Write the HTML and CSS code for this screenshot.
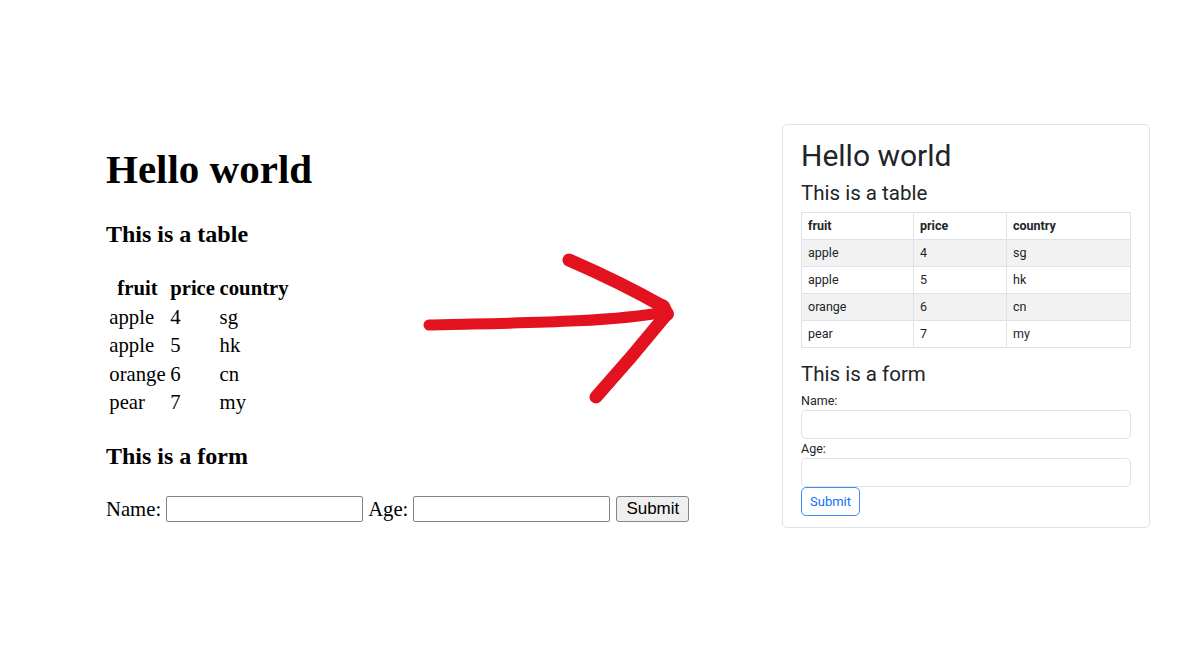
FILE: index.html
```html
<!DOCTYPE html>
<html lang="en">
<head>
    <meta charset="UTF-8">
    <meta name="viewport" content="width=device-width, initial-scale=1.0">
    <title>Before and after</title>
    <link rel="stylesheet" href="styles.css">
</head>
<body>
    <div class="page">
        <div class="plain">
            <h1>Hello world</h1>
            <h3>This is a table</h3>
            <table>
                <tr><th>fruit</th><th>price</th><th>country</th></tr>
                <tr><td>apple</td><td>4</td><td>sg</td></tr>
                <tr><td>apple</td><td>5</td><td>hk</td></tr>
                <tr><td>orange</td><td>6</td><td>cn</td></tr>
                <tr><td>pear</td><td>7</td><td>my</td></tr>
            </table>
            <h3 class="form-title">This is a form</h3>
            <form class="plain-form">
                <label for="name">Name:</label>
                <input type="text" id="name">
                <label for="age">Age:</label>
                <input type="text" id="age">
                <button type="button">Submit</button>
            </form>
        </div>

        <div class="card">
            <h1>Hello world</h1>
            <h3>This is a table</h3>
            <table class="table">
                <tr><th class="c1">fruit</th><th class="c2">price</th><th>country</th></tr>
                <tr class="odd"><td>apple</td><td>4</td><td>sg</td></tr>
                <tr><td>apple</td><td>5</td><td>hk</td></tr>
                <tr class="odd"><td>orange</td><td>6</td><td>cn</td></tr>
                <tr><td>pear</td><td>7</td><td>my</td></tr>
            </table>
            <h3 class="form-title">This is a form</h3>
            <form class="card-form">
                <label for="name2">Name:</label>
                <input type="text" id="name2">
                <label for="age2">Age:</label>
                <input type="text" id="age2">
                <button type="button">Submit</button>
            </form>
        </div>

        <svg class="arrow" viewBox="0 0 1200 656" width="1200" height="656">
            <g fill="none" stroke="#e3121f" stroke-linecap="round" stroke-linejoin="round">
                <path d="M429,325 C500,323 610,323 664,312" stroke-width="11"/>
                <path d="M569,260 Q622,283 664,307" stroke-width="13"/>
                <path d="M666,315 Q632,357 596,397" stroke-width="13"/>
                <path d="M662,306 L667,314" stroke-width="14"/>
            </g>
        </svg>
    </div>
</body>
</html>
```

FILE: styles.css
```css
body {
    margin: 0;
    background-color: #fff;
}
.page {
    position: relative;
    width: 1200px;
    height: 656px;
    box-sizing: border-box;
    display: flex;
    justify-content: space-between;
    align-items: flex-start;
    padding: 124px 50px 0 106px;
    overflow: hidden;
}

/* unstyled side */
.plain {
    padding-top: 22px;
    font-family: "Liberation Serif", "Times New Roman", serif;
    font-size: 20.7px;
    color: #000;
}
.plain h1 {
    font-size: 41px;
    line-height: 46px;
    margin: 0 0 28px;
}
.plain h3 {
    font-size: 24px;
    line-height: 28px;
    margin: 0 0 26px;
}
.plain table {
    border-spacing: 2.5px;
    margin-bottom: 23px;
}
.plain th, .plain td {
    padding: 1.3px;
    line-height: 23.9px;
}
.plain td {
    text-align: left;
}
.plain .form-title {
    margin-bottom: 26px;
}
.plain-form {
    display: flex;
    align-items: center;
    gap: 5px;
    height: 26px;
    line-height: 26px;
}
.plain-form input {
    width: 197px;
    height: 26px;
    box-sizing: border-box;
    border: 1px solid #858585;
    border-radius: 2px;
    margin: 0;
    padding: 0 3px;
}
.plain-form button {
    height: 26px;
    padding: 0 9px;
    margin-left: 1px;
    font-family: "Liberation Sans", Arial, sans-serif;
    font-size: 17px;
    color: #000;
    background-color: #efefef;
    border: 1px solid #858585;
    border-radius: 3px;
}

/* styled side */
.card {
    width: 368px;
    box-sizing: border-box;
    border: 1px solid #dfe2e5;
    border-radius: 5px;
    padding: 13px 18px 11px;
    font-family: Roboto, "Liberation Sans", Arial, sans-serif;
    color: #212529;
}
.card h1 {
    font-size: 30px;
    font-weight: 400;
    line-height: 36px;
    margin: 0 0 7px;
}
.card h3 {
    font-size: 20.5px;
    font-weight: 400;
    line-height: 24.6px;
    margin: 0 0 6px;
}
.table {
    width: 100%;
    table-layout: fixed;
    border-collapse: collapse;
    font-size: 12.5px;
    margin-bottom: 14px;
}
.table th, .table td {
    border: 1px solid #dee2e6;
    padding: 4px 6px;
    line-height: 18px;
    text-align: left;
}
.table th {
    font-weight: 700;
}
.table .c1 { width: 99px; }
.table .c2 { width: 80px; }
.table .odd td {
    background-color: #f2f2f2;
}
.card .form-title {
    margin-bottom: 5px;
}
.card-form label {
    display: block;
    font-size: 12.5px;
    line-height: 19px;
}
.card-form input {
    display: block;
    width: 100%;
    height: 29px;
    box-sizing: border-box;
    border: 1px solid #dee2e6;
    border-radius: 5px;
    margin: 0;
}
.card-form button {
    display: block;
    margin-top: 0;
    width: 59px;
    height: 29px;
    padding: 0;
    font-family: Roboto, "Liberation Sans", Arial, sans-serif;
    font-size: 13px;
    color: #0d6efd;
    background-color: #fff;
    border: 1px solid #3d8bfd;
    border-radius: 5px;
}

.arrow {
    position: absolute;
    left: 0;
    top: 0;
    pointer-events: none;
}
```
